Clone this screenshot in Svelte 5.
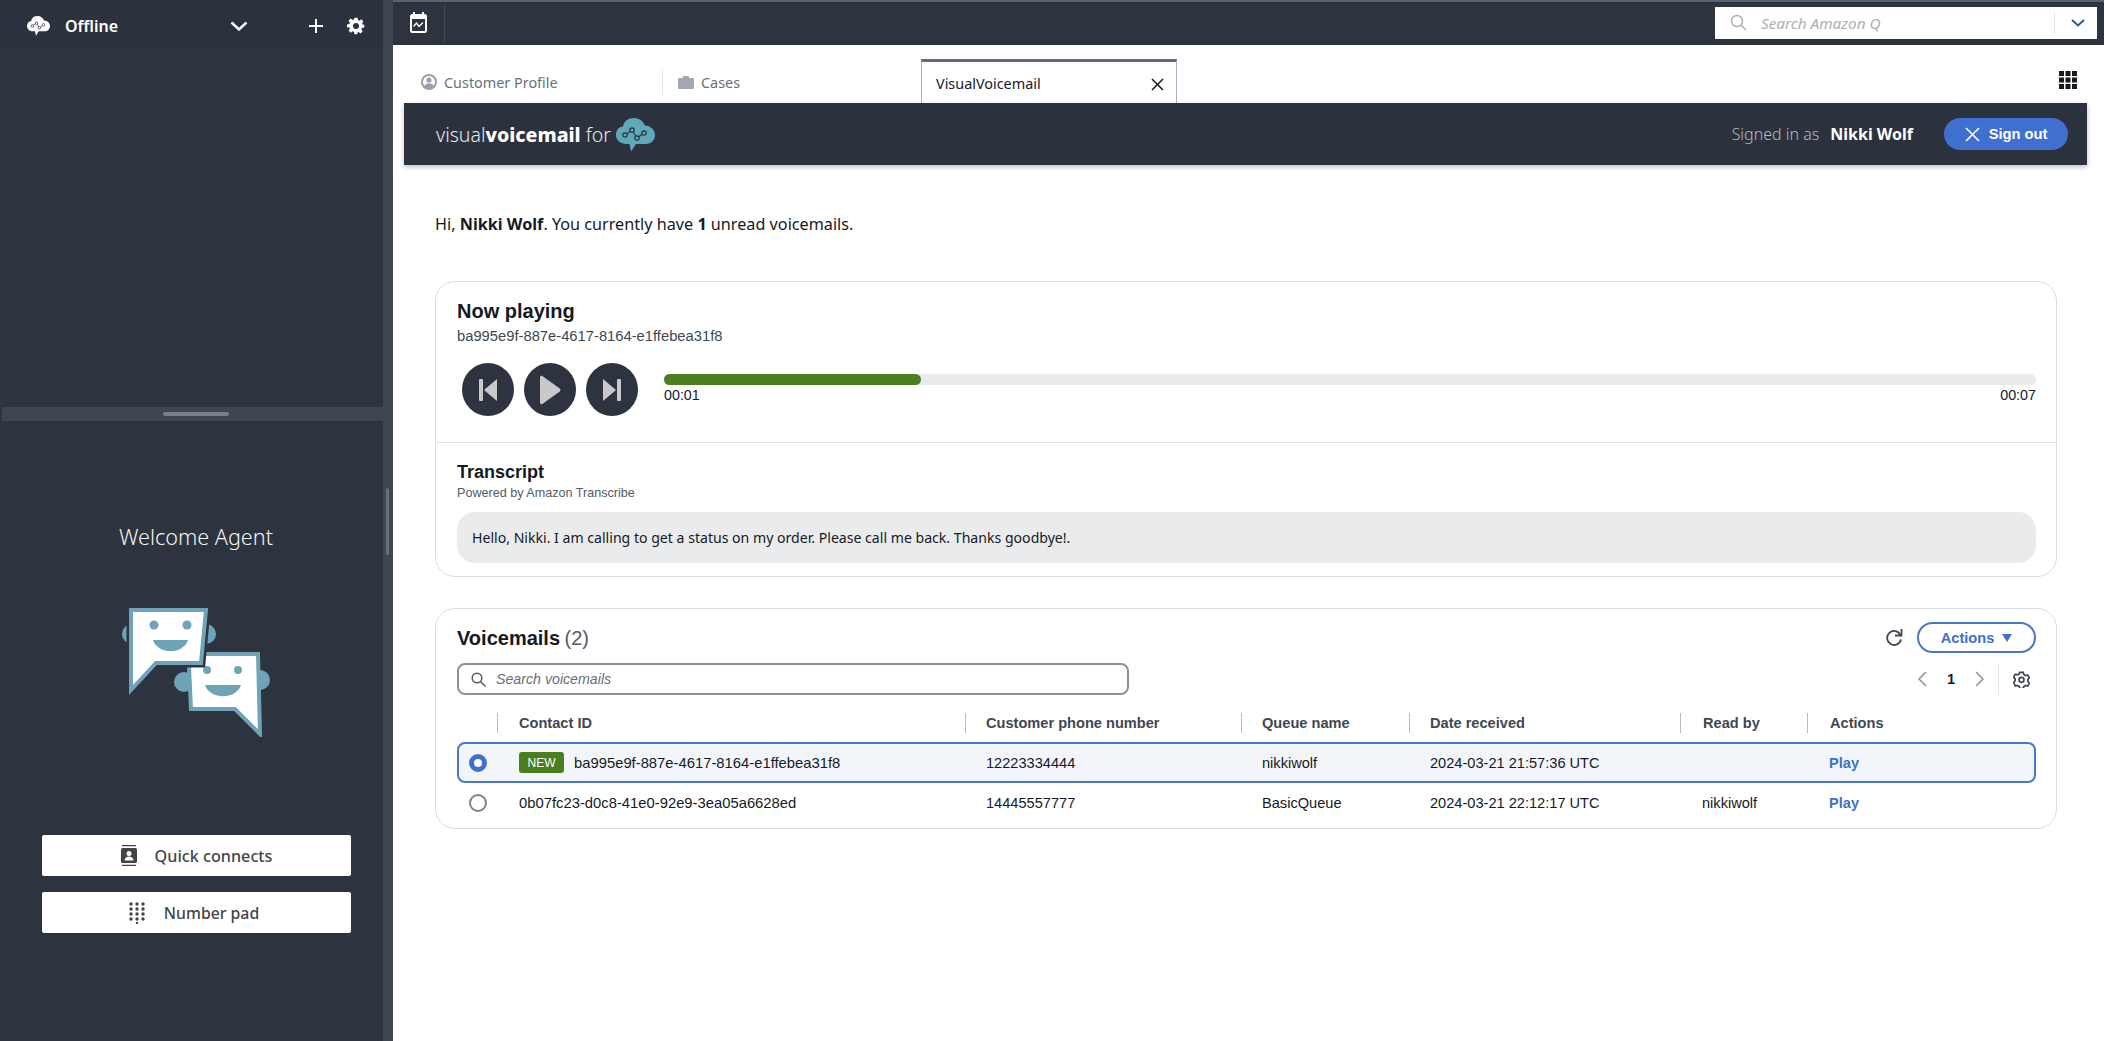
<script>
    const columns = ["Contact ID", "Customer phone number", "Queue name", "Date received", "Read by", "Actions"];

    const voicemails = [
        {
            id: "ba995e9f-887e-4617-8164-e1ffebea31f8",
            isNew: true,
            phone: "12223334444",
            queue: "nikkiwolf",
            date: "2024-03-21 21:57:36 UTC",
            readBy: ""
        },
        {
            id: "0b07fc23-d0c8-41e0-92e9-3ea05a6628ed",
            isNew: false,
            phone: "14445557777",
            queue: "BasicQueue",
            date: "2024-03-21 22:12:17 UTC",
            readBy: "nikkiwolf"
        }
    ];

    let selected = $state(voicemails[0].id);
    let progress = $state(18.7);
</script>

{#snippet cloud(fill, stroke)}
    <path
        d="M11 26C4 26 0 22 0 17 0 12 3 9 7 8.500 8 3 12 0 18 0c5 0 9 3 11 7.500C35 8 39 12 39 17c0 5-4 9-9 9H20l-5 7.500L13.500 26z"
        {fill}
    />
    <path d="M9 17l7-5 5 8 7-5" fill="none" {stroke} stroke-width="1.200" />
    <g {fill} {stroke} stroke-width="1.200">
        <circle cx="9" cy="17" r="2.200" />
        <circle cx="16" cy="12" r="2.200" />
        <circle cx="21" cy="20" r="2.200" />
        <circle cx="28" cy="15" r="2.200" />
    </g>
{/snippet}

<div class="app">
    <aside class="ccp">
        <div class="panel-head">
            <svg class="status-cloud" viewBox="0 0 39 34" aria-hidden="true">
                {@render cloud("#fff", "#2c323d")}
            </svg>
            <span class="status">Offline</span>
            <svg class="chev" viewBox="0 0 18 10" aria-hidden="true">
                <path d="M1.500 1.500 9 8.500l7.500-7" fill="none" stroke="#fff" stroke-width="2.400" />
            </svg>
            <svg class="plus" viewBox="0 0 14 14" aria-hidden="true">
                <path d="M7 0v14M0 7h14" stroke="#fff" stroke-width="2" />
            </svg>
            <svg class="gear" viewBox="0 0 24 24" aria-hidden="true">
                <path
                    fill="#fff"
                    fill-rule="evenodd"
                    d="M10 1h4l.6 3.100 1.900.8 2.600-1.800 2.800 2.800-1.800 2.600.8 1.900L23 10v4l-3.100.6-.8 1.900 1.800 2.600-2.800 2.800-2.600-1.800-1.900.8L13.900 23h-4l-.5-3.100-1.900-.8-2.600 1.800-2.800-2.800 1.800-2.600-.8-1.900L0 13.900v-4l3.100-.5.8-1.900-1.800-2.600 2.800-2.800 2.600 1.800 1.900-.8zM12 8a4 4 0 1 0 0 8 4 4 0 0 0 0-8z"
                />
            </svg>
        </div>
        <div class="panel-top"></div>
        <div class="splitter"><span></span></div>
        <div class="panel-bottom">
            <p class="welcome">Welcome Agent</p>
            <svg class="bubbles" viewBox="0 0 148 130" aria-hidden="true">
                <circle cx="62" cy="75" r="10" fill="#6fa3b8" />
                <circle cx="138" cy="73" r="10" fill="#6fa3b8" />
                <path d="M82 47H136L138 127 113 102H69L67 60Z" fill="#fff" stroke="#6fa3b8" stroke-width="4" />
                <circle cx="85" cy="63" r="4" fill="#6fa3b8" />
                <circle cx="116" cy="63" r="4" fill="#6fa3b8" />
                <path d="M83 78H119C114 93 88 93 83 78Z" fill="#6fa3b8" />
                <circle cx="10" cy="27" r="10" fill="#6fa3b8" />
                <circle cx="84" cy="27" r="10" fill="#6fa3b8" />
                <path d="M9 3H84L79 56H34L9 83Z" fill="#fff" stroke="#2e343f" stroke-width="9" />
                <path d="M9 3H84L79 56H34L9 83Z" fill="#fff" stroke="#6fa3b8" stroke-width="4" />
                <circle cx="32" cy="18" r="4.500" fill="#6fa3b8" />
                <circle cx="65" cy="18" r="4.500" fill="#6fa3b8" />
                <path d="M31 33H66C61 48 36 48 31 33Z" fill="#6fa3b8" />
            </svg>
            <button class="ccp-btn first">
                <svg width="18" height="21" viewBox="0 0 18 21" aria-hidden="true">
                    <path d="M2 .5h14M2 20.500h14" stroke="#444" stroke-width="1.400" />
                    <rect x="1" y="3" width="16" height="15" rx="1.500" fill="#444" />
                    <circle cx="9" cy="8.500" r="2.500" fill="#fff" />
                    <path d="M4.500 15.500c.4-3 2.400-4 4.500-4s4.100 1 4.500 4z" fill="#fff" />
                </svg>
                Quick connects
            </button>
            <button class="ccp-btn">
                <svg width="16" height="22" viewBox="0 0 16 22" fill="#444" aria-hidden="true">
                    {#each [2, 7, 12, 17] as y}
                        {#each [2, 8, 14] as x}
                            <circle cx={x} cy={y} r="1.700" />
                        {/each}
                    {/each}
                    <circle cx="8" cy="21" r="1.200" />
                </svg>
                Number pad
            </button>
        </div>
        <div class="gutter"><span></span></div>
    </aside>

    <main>
        <header class="topbar">
            <div class="cal">
                <svg width="17" height="21" viewBox="0 0 17 21" aria-hidden="true">
                    <path d="M4 0v4M13 0v4" stroke="#fff" stroke-width="2" />
                    <rect x="1" y="3" width="15" height="17" rx="1.500" fill="none" stroke="#fff" stroke-width="2" />
                    <path d="M1 3h15v4H1z" fill="#fff" />
                    <path d="M3.500 14.500 6.500 11l2.500 3.500 4-4" fill="none" stroke="#fff" stroke-width="1.300" />
                </svg>
            </div>
            <div class="q-search">
                <svg width="17" height="17" viewBox="0 0 17 17" aria-hidden="true">
                    <circle cx="7" cy="7" r="5.500" fill="none" stroke="#a9adb3" stroke-width="1.400" />
                    <path d="m11 11 5 5" stroke="#a9adb3" stroke-width="1.400" />
                </svg>
                <span>Search Amazon Q</span>
                <i></i>
                <svg class="q-chev" width="14" height="8" viewBox="0 0 14 8" aria-hidden="true">
                    <path d="M1 1l6 5.500L13 1" fill="none" stroke="#33587f" stroke-width="2" />
                </svg>
            </div>
        </header>

        <nav class="tabs">
            <div class="tab">
                <svg width="16" height="16" viewBox="0 0 16 16" aria-hidden="true">
                    <circle cx="8" cy="8" r="7" fill="none" stroke="#9aa0ab" stroke-width="2" />
                    <circle cx="8" cy="6" r="2.600" fill="#9aa0ab" />
                    <path d="M3 12.500c1-2.500 3-3.300 5-3.300s4 .8 5 3.300C11 15 5 15 3 12.500z" fill="#9aa0ab" />
                </svg>
                Customer Profile
            </div>
            <div class="tab">
                <svg width="16" height="14" viewBox="0 0 16 14" aria-hidden="true">
                    <path d="M5 3V1h6v2h4a1 1 0 0 1 1 1v9a1 1 0 0 1-1 1H1a1 1 0 0 1-1-1V4a1 1 0 0 1 1-1z" fill="#a3a8b4" />
                </svg>
                Cases
            </div>
            <div class="tab active">
                VisualVoicemail
                <svg class="close" width="13" height="13" viewBox="0 0 13 13" aria-hidden="true">
                    <path d="M1 1l11 11M12 1 1 12" stroke="#16191f" stroke-width="1.500" />
                </svg>
            </div>
            <svg class="apps" width="18" height="18" viewBox="0 0 18 18" fill="#16191f" aria-hidden="true">
                {#each [0, 6.500, 13] as y}
                    {#each [0, 6.500, 13] as x}
                        <rect {x} {y} width="5" height="5" />
                    {/each}
                {/each}
            </svg>
        </nav>

        <div class="app-head">
            <div class="logo">
                <span class="word">visual<b>voicemail</b> for</span>
                <svg width="39" height="34" viewBox="0 0 39 34" aria-hidden="true">
                    {@render cloud("#5fa8b8", "#2c323d")}
                </svg>
            </div>
            <div class="user">
                <span class="signed">Signed in as</span>
                <b>Nikki Wolf</b>
                <button class="signout">
                    <svg width="15" height="15" viewBox="0 0 15 15" aria-hidden="true">
                        <path d="M1 1l13 13M14 1 1 14" stroke="#fff" stroke-width="1.700" />
                    </svg>
                    Sign out
                </button>
            </div>
        </div>

        <div class="content">
            <p class="greet">Hi, <b>Nikki Wolf</b>. You currently have <b>1</b> unread voicemails.</p>

            <section class="card player">
                <div class="now">
                    <h2>Now playing</h2>
                    <p class="track-id">{selected}</p>
                    <div class="controls">
                        <div class="buttons">
                            <button class="round" aria-label="Previous">
                                <svg width="20" height="24" viewBox="0 0 20 24" fill="#c9c9c9" aria-hidden="true">
                                    <rect x="1" y="1" width="4" height="22" rx="1" />
                                    <path d="M19 1v22L6 12z" />
                                </svg>
                            </button>
                            <button class="round" aria-label="Play">
                                <svg width="22" height="30" viewBox="0 0 22 30" fill="#c9c9c9" aria-hidden="true">
                                    <path d="M1 2.500C1 1 2.500.4 3.700 1.200l17 12.200c1 .8 1 2.400 0 3.200l-17 12.200C2.500 29.600 1 29 1 27.500z" />
                                </svg>
                            </button>
                            <button class="round" aria-label="Next">
                                <svg width="20" height="24" viewBox="0 0 20 24" fill="#c9c9c9" aria-hidden="true">
                                    <path d="M1 1v22l13-11z" />
                                    <rect x="15" y="1" width="4" height="22" rx="1" />
                                </svg>
                            </button>
                        </div>
                        <div class="progress">
                            <div class="track"><div class="fill" style="width: {progress}%"></div></div>
                            <div class="times"><span>00:01</span><span>00:07</span></div>
                        </div>
                    </div>
                </div>
                <div class="transcript">
                    <h3>Transcript</h3>
                    <p class="powered">Powered by Amazon Transcribe</p>
                    <div class="bubble">Hello, Nikki. I am calling to get a status on my order. Please call me back. Thanks goodbye!.</div>
                </div>
            </section>

            <section class="card list">
                <div class="list-head">
                    <h2>Voicemails <span>(2)</span></h2>
                    <div class="list-actions">
                        <svg width="18" height="19" viewBox="0 0 18 19" aria-hidden="true">
                            <path d="M15.500 7A7 7 0 1 0 16 11.500" fill="none" stroke="#414750" stroke-width="1.800" />
                            <path d="M16.500 1v6.500H10" fill="none" stroke="#414750" stroke-width="1.800" />
                        </svg>
                        <button class="actions-btn">Actions <em></em></button>
                    </div>
                </div>
                <div class="tools">
                    <div class="search">
                        <svg width="15" height="15" viewBox="0 0 15 15" aria-hidden="true">
                            <circle cx="6" cy="6" r="4.800" fill="none" stroke="#545b64" stroke-width="1.500" />
                            <path d="m9.500 9.500 5 5" stroke="#545b64" stroke-width="1.500" />
                        </svg>
                        <span>Search voicemails</span>
                    </div>
                    <div class="pager">
                        <svg width="10" height="16" viewBox="0 0 10 16" aria-hidden="true">
                            <path d="M9 1 2 8l7 7" fill="none" stroke="#8d9299" stroke-width="1.500" />
                        </svg>
                        <b>1</b>
                        <svg width="10" height="16" viewBox="0 0 10 16" aria-hidden="true">
                            <path d="M1 1l7 7-7 7" fill="none" stroke="#8d9299" stroke-width="1.500" />
                        </svg>
                        <i></i>
                        <svg width="17" height="17" viewBox="0 0 24 24" aria-hidden="true">
                            <path
                                fill="none"
                                stroke="#414750"
                                stroke-width="2.400"
                                d="M9.500 2h5l.7 3 2.500 1.400 3-.9 2.400 4.200-2.200 2.300v2.800l2.200 2.300-2.400 4.200-3-.9-2.500 1.400-.7 3h-5l-.7-3-2.500-1.400-3 .9L.9 16.100l2.200-2.300V11L.9 8.700l2.400-4.200 3 .9 2.500-1.400z"
                            />
                            <circle cx="12" cy="12.500" r="3.500" fill="none" stroke="#414750" stroke-width="2.400" />
                        </svg>
                    </div>
                </div>

                <div class="row header">
                    <div></div>
                    {#each columns as col}
                        <div class="th">{col}</div>
                    {/each}
                </div>
                {#each voicemails as vm}
                    <div class="row" class:selected={selected === vm.id}>
                        <div class="radio-cell"><span class="radio"></span></div>
                        <div class="td">
                            {#if vm.isNew}<span class="badge">NEW</span>{/if}
                            {vm.id}
                        </div>
                        <div class="td">{vm.phone}</div>
                        <div class="td">{vm.queue}</div>
                        <div class="td">{vm.date}</div>
                        <div class="td">{vm.readBy}</div>
                        <div class="td play">Play</div>
                    </div>
                {/each}
            </section>
        </div>
    </main>
</div>

<style>
    :global(body) {
        margin: 0;
        background: #fff;
    }

    .app {
        display: flex;
        height: 1041px;
        overflow: hidden;
        font-family: "Noto Sans", sans-serif;
        color: #16191f;
    }

    p, h2, h3 {
        margin: 0;
    }

    button {
        font: inherit;
        border: 0;
        cursor: pointer;
    }

    /* left agent panel */
    .ccp {
        width: 393px;
        flex: none;
        display: grid;
        grid-template-columns: 381px 10px;
        grid-template-rows: 48px 359px 14px 1fr;
        padding-left: 2px;
        box-sizing: border-box;
        background: #2e343f;
        color: #fff;
    }

    .panel-head {
        display: flex;
        align-items: center;
        background: #2c323d;
        padding-top: 4px;
        box-sizing: border-box;
        font-size: 16px;
        font-weight: 600;
    }

    .status-cloud {
        width: 23px;
        height: 20px;
        margin-left: 25px;
    }

    .status {
        margin-left: 15px;
        width: 165px;
    }

    .chev {
        width: 18px;
        height: 10px;
    }

    .plus {
        width: 14px;
        height: 14px;
        margin-left: 61px;
    }

    .gear {
        width: 18px;
        height: 18px;
        margin-left: 24px;
    }

    .panel-top {
        grid-column: 1;
    }

    .splitter {
        grid-column: 1;
        background: #3f4650;
        display: flex;
        align-items: center;
        justify-content: center;
        padding-left: 7px;
    }

    .splitter span {
        width: 66px;
        height: 4px;
        border-radius: 2px;
        background: #7a7f87;
    }

    .panel-bottom {
        grid-column: 1;
        display: flex;
        flex-direction: column;
        align-items: center;
        padding-left: 7px;
    }

    .welcome {
        margin-top: 101px;
        font-size: 21.600px;
        line-height: 30px;
        font-weight: 300;
        color: #f2f3f3;
    }

    .bubbles {
        width: 148px;
        height: 130px;
        margin-top: 55px;
    }

    .ccp-btn {
        width: 309px;
        height: 41px;
        margin-top: 98px;
        display: flex;
        align-items: center;
        justify-content: center;
        gap: 17px;
        background: #fff;
        border-radius: 2px;
        color: #444;
        font-size: 16.200px;
        font-weight: 500;
    }

    .ccp-btn.first + .ccp-btn {
        margin-top: 16px;
        font-size: 15.800px;
        gap: 19px;
        padding-left: 2px;
    }

    .gutter {
        grid-column: 2;
        grid-row: 1 / 5;
        background: #3f4650;
        position: relative;
    }

    .gutter span {
        position: absolute;
        left: 3px;
        top: 488px;
        width: 3px;
        height: 67px;
        border-radius: 2px;
        background: #6a6f78;
    }

    /* main column */
    main {
        flex: 1;
        min-width: 0;
        display: flex;
        flex-direction: column;
    }

    .topbar {
        height: 45px;
        flex: none;
        box-sizing: border-box;
        border-top: 2px solid #5b606a;
        background: #2e343f;
        display: flex;
        align-items: center;
        justify-content: space-between;
        padding: 0 7px 2px 0;
    }

    .cal {
        width: 52px;
        height: 38px;
        box-sizing: border-box;
        border-right: 1px solid #454b55;
        display: flex;
        align-items: center;
        justify-content: center;
        padding-right: 1px;
    }

    .q-search {
        width: 382px;
        height: 32px;
        background: #fff;
        display: flex;
        align-items: center;
        padding-left: 15px;
        box-sizing: border-box;
        font-size: 15.300px;
        color: #aab0b6;
        font-style: italic;
    }

    .q-search span {
        margin-left: 14px;
        width: 293px;
    }

    .q-search i {
        width: 1px;
        height: 24px;
        background: #e6e7e9;
    }

    .q-chev {
        margin-left: 16px;
    }

    .tabs {
        height: 58px;
        flex: none;
        box-sizing: border-box;
        padding: 14px 27px 0 11px;
        display: flex;
        align-items: stretch;
    }

    .tab {
        width: 259px;
        position: relative;
        display: flex;
        align-items: center;
        gap: 7px;
        padding-left: 17px;
        padding-top: 2px;
        box-sizing: border-box;
        font-size: 14.400px;
        color: #687078;
    }

    .tab:first-child::after {
        content: "";
        position: absolute;
        right: 0;
        top: 11px;
        height: 25px;
        width: 1px;
        background: #e6e7e9;
    }

    .tab:nth-child(2) {
        width: 258px;
        padding-left: 15px;
    }

    .tab.active {
        width: 256px;
        border: 1px solid #aab0c0;
        border-top: 3px solid #5f6a85;
        border-bottom: 0;
        color: #16191f;
        padding-left: 14px;
    }

    .close {
        position: absolute;
        right: 12px;
        top: 16px;
    }

    .apps {
        margin: 0 0 0 auto;
        align-self: center;
        transform: translateY(-1px);
    }

    .app-head {
        height: 62px;
        flex: none;
        margin: 0 17px 0 11px;
        background: #2c323d;
        box-shadow: 0 2px 5px rgba(0, 0, 0, 0.25);
        display: flex;
        align-items: center;
        justify-content: space-between;
        color: #fff;
    }

    .logo {
        display: flex;
        align-items: center;
        gap: 5px;
        margin-left: 32px;
        padding-top: 1px;
    }

    .word {
        font-size: 19.500px;
        font-weight: 300;
        color: #e6e8ea;
    }

    .word b {
        font-weight: 800;
        color: #fff;
    }

    .user {
        display: flex;
        align-items: center;
        font-size: 16px;
        padding-right: 19px;
    }

    .signed {
        color: #b5b8bd;
        font-weight: 300;
    }

    .user b {
        margin-left: 11px;
    }

    .signout {
        margin-left: 31px;
        width: 124px;
        height: 32px;
        border-radius: 16px;
        background: #3f6fcf;
        color: #fff;
        display: flex;
        align-items: center;
        justify-content: center;
        gap: 9px;
        font-family: "Liberation Sans", sans-serif;
        font-size: 14.700px;
        font-weight: 700;
    }

    .content {
        padding: 0 47px 0 42px;
    }

    .greet {
        margin-top: 49px;
        font-size: 16.200px;
        line-height: 20px;
    }

    .card {
        border: 1px solid #d8dbdf;
        border-radius: 20px;
        font-family: "Liberation Sans", sans-serif;
    }

    .player {
        margin-top: 47px;
    }

    .now {
        height: 161px;
        box-sizing: border-box;
        padding: 15px 20px 0 21px;
        border-bottom: 1px solid #dfe1e4;
    }

    h2 {
        font-size: 20px;
        line-height: 28px;
        font-weight: 700;
    }

    .track-id {
        margin-top: 2px;
        font-size: 14.750px;
        line-height: 18px;
        color: #414750;
    }

    .controls {
        display: flex;
        margin-top: 18px;
    }

    .buttons {
        display: flex;
        gap: 10px;
        margin-left: 5px;
    }

    .round {
        width: 52px;
        height: 53px;
        border-radius: 50%;
        background: #2e343f;
        display: flex;
        align-items: center;
        justify-content: center;
        padding: 0;
    }

    .progress {
        flex: 1;
        margin-left: 26px;
        padding-top: 11px;
    }

    .track {
        height: 11px;
        border-radius: 6px;
        background: #e9ebed;
    }

    .fill {
        height: 100%;
        border-radius: 6px;
        background: #4a7f1f;
    }

    .times {
        display: flex;
        justify-content: space-between;
        margin-top: 2px;
        font-size: 14.300px;
        line-height: 16px;
    }

    .transcript {
        padding: 18px 20px 13px 21px;
    }

    h3 {
        font-size: 18px;
        line-height: 22px;
        font-weight: 700;
    }

    .powered {
        margin-top: 3px;
        font-size: 12.600px;
        line-height: 14px;
        color: #545b64;
    }

    .bubble {
        margin-top: 12px;
        height: 51px;
        box-sizing: border-box;
        padding-left: 15px;
        display: flex;
        align-items: center;
        border-radius: 18px;
        background: #e9ebed;
        font-family: "Noto Sans", sans-serif;
        font-size: 14.100px;
    }

    .list {
        margin-top: 31px;
        padding: 13px 20px 5px 21px;
    }

    .list-head {
        display: flex;
        align-items: center;
        justify-content: space-between;
        height: 31px;
    }

    .list-head h2 span {
        font-weight: 400;
        color: #545b64;
        margin-left: -1px;
    }

    .list-actions {
        display: flex;
        align-items: center;
        gap: 14px;
    }

    .actions-btn {
        width: 119px;
        height: 31px;
        border: 2px solid #4a77c9;
        border-radius: 16px;
        background: #fff;
        color: #3f6fcf;
        font-size: 14.600px;
        font-weight: 700;
        display: flex;
        align-items: center;
        justify-content: center;
        gap: 8px;
    }

    .actions-btn em {
        border: 5.500px solid transparent;
        border-top: 8px solid #3f6fcf;
        border-bottom: 0;
    }

    .tools {
        display: flex;
        justify-content: space-between;
        align-items: center;
        margin-top: 10px;
    }

    .search {
        width: 672px;
        height: 32px;
        box-sizing: border-box;
        border: 2px solid #8d9299;
        border-radius: 8px;
        display: flex;
        align-items: center;
        gap: 10px;
        padding-left: 12px;
        font-size: 14.200px;
        font-style: italic;
        color: #687078;
    }

    .pager {
        display: flex;
        align-items: center;
        height: 32px;
        margin-right: 6px;
        font-size: 14.600px;
    }

    .pager b {
        margin: 0 20px 0 20px;
    }

    .pager i {
        width: 1px;
        height: 32px;
        background: #e6e7e9;
        margin: 0 14px 0 13px;
    }

    .row {
        display: grid;
        grid-template-columns: 38px 468px 276px 168px 271px 127px 1fr;
        height: 40px;
        align-items: center;
        box-sizing: border-box;
        border: 2px solid transparent;
        border-radius: 8px;
        font-size: 14.600px;
    }

    .row.header {
        height: 31px;
        align-items: start;
        margin-top: 16px;
        color: #414750;
        font-weight: 700;
    }

    .row.selected {
        height: 41px;
        border-color: #4a77c9;
        background: #f2f6fb;
    }

    .th {
        border-left: 1px solid #b9bdc3;
        height: 20px;
        line-height: 20px;
        padding-left: 20px;
    }

    .td {
        padding-left: 21px;
        display: flex;
        align-items: center;
        gap: 10px;
    }

    .row > :nth-child(2) {
        padding-left: 22px;
    }

    .th:nth-child(2) {
        padding-left: 21px;
    }

    .td:nth-child(2) {
        font-size: 14.800px;
    }

    .row > :nth-child(6) {
        padding-left: 22px;
    }

    .row > :nth-child(7) {
        padding-left: 22px;
    }

    .radio-cell {
        display: flex;
        justify-content: center;
    }

    .radio {
        width: 14px;
        height: 14px;
        border: 2px solid #7d8288;
        border-radius: 50%;
    }

    .selected .radio {
        width: 8px;
        height: 8px;
        border: 5px solid #3f6fcf;
        background: #fff;
    }

    .badge {
        width: 45px;
        height: 21px;
        border-radius: 3px;
        background: #4a7f1f;
        color: #fff;
        font-size: 12px;
        display: flex;
        align-items: center;
        justify-content: center;
    }

    .play {
        color: #3f6fcf;
        font-weight: 700;
    }
</style>
